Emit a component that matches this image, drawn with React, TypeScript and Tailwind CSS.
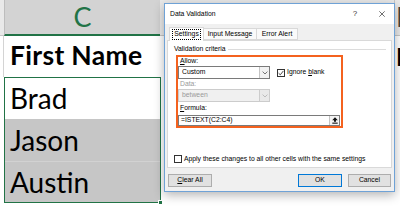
import React from "react";

function Chevron({ color }: { color: string }) {
  return (
    <svg width="6" height="4" viewBox="0 0 6 4">
      <path d="M0.6 0.6 L3 3 L5.4 0.6" fill="none" stroke={color} strokeWidth="0.8" />
    </svg>
  );
}

function Select({ value, disabled }: { value: string; disabled?: boolean }) {
  return (
    <div
      className={
        disabled
          ? "flex h-[13px] w-[92px] border border-[#cccccc] bg-[#f0f0f0] text-[#9a9a9a]"
          : "flex h-[13px] w-[92px] border border-[#7a7a7a] bg-white text-black"
      }
    >
      <div className="flex flex-1 items-center pl-[3px]">{value}</div>
      <div
        className={
          disabled
            ? "flex w-[10px] items-center justify-center border-l border-[#cccccc] bg-[#e9e9e9]"
            : "flex w-[10px] items-center justify-center border-l border-[#c4c4c4] bg-[#f2f2f2]"
        }
      >
        <Chevron color={disabled ? "#b0b0b0" : "#555555"} />
      </div>
    </div>
  );
}

function Check({ checked }: { checked?: boolean }) {
  return (
    <div className="flex h-[8px] w-[8px] shrink-0 items-center justify-center border border-[#333333] bg-white">
      {checked && (
        <svg width="6" height="6" viewBox="0 0 6 6">
          <path d="M0.6 3.2 L2.3 4.8 L5.4 0.9" fill="none" stroke="#222" strokeWidth="0.8" />
        </svg>
      )}
    </div>
  );
}

function Sheet() {
  return (
    <div className="flex flex-col font-['Lato',sans-serif]">
      <div className="flex h-[36px]">
        <div className="w-[4px] border-b border-[#c6c6c6] bg-[#e9e9e9]" />
        <div className="flex w-[156px] items-center justify-center border-b-2 border-l border-b-[#217346] border-l-[#bdbdbd] bg-[#d3d3d3] pb-[1px] text-[27px] leading-none text-[#217346]">
          C
        </div>
        <div className="w-[234px] border-b border-[#c6c6c6] bg-[#e9e9e9]" />
        <div className="flex-1 overflow-hidden border-b border-l border-[#c6c6c6] bg-[#e9e9e9] pl-[1px] text-[27px] leading-[34px] text-[#444444]">
          E
        </div>
      </div>
      <div className="flex h-[41px]">
        <div className="w-[4px] border-r border-[#d4d4d4]" />
        <div className="w-[156px] whitespace-nowrap pl-[6px] text-[26.5px] font-bold leading-[39px] tracking-[0.3px] text-black">
          First Name
        </div>
        <div className="w-[234px]" />
        <div className="flex-1 overflow-hidden pl-[2px] text-[24px] font-bold leading-[41px] text-black">E</div>
      </div>
      <div className="flex">
        <div className="w-[4px]" />
        <div className="relative w-[157px] border border-[#217346] text-[28px] text-black">
          <div className="h-[41px] bg-white pl-[5px] leading-[41px]">Brad</div>
          <div className="h-[42px] bg-[#c6c6c6] pl-[5px] leading-[42px]">Jason</div>
          <div className="h-[41px] border-t border-[#d2d2d2] bg-[#c6c6c6] pl-[5px] leading-[40px]">Austin</div>
          <div className="absolute bottom-[-3px] right-[-3px] h-[5px] w-[5px] border border-white bg-[#217346]" />
        </div>
      </div>
    </div>
  );
}

function Dialog() {
  return (
    <div className="absolute left-[164px] top-[3px] flex h-[189px] w-[231px] flex-col border border-[#6fa2d6] bg-[#f0f0f0] font-['Liberation_Sans',Arial,sans-serif] text-[6.8px] leading-none text-black shadow-[0_3px_10px_rgba(0,0,0,0.3)]">
      <div className="flex h-[20px] shrink-0 items-center bg-white pl-[5px]">
        <span>Data Validation</span>
        <span className="ml-auto flex w-[10px] justify-center text-[8px] text-[#333]">?</span>
        <span className="ml-[17px] mr-[7px] flex w-[10px] justify-center">
          <svg width="6" height="6" viewBox="0 0 6 6">
            <path d="M0.3 0.3 L5.7 5.7 M5.7 0.3 L0.3 5.7" stroke="#333" strokeWidth="0.7" />
          </svg>
        </span>
      </div>
      <div className="flex flex-col px-[2px] pt-[3px]">
        <div className="relative z-10 ml-[2px] flex h-[13px]">
          <div className="flex h-[14px] w-[35px] items-center justify-center border border-b-0 border-[#d9d9d9] bg-white">
            <span className="border border-dotted border-black px-[1px] py-[1.5px]">Settings</span>
          </div>
          <div className="mt-[1px] flex h-[12px] w-[53px] items-center justify-center border border-l-0 border-[#d9d9d9] bg-[#fafafa]">
            Input Message
          </div>
          <div className="mt-[1px] flex h-[12px] w-[41px] items-center justify-center border border-l-0 border-[#d9d9d9] bg-[#fafafa]">
            Error Alert
          </div>
        </div>
        <div className="flex h-[128px] flex-col border border-[#d9d9d9] bg-white">
          <div className="mt-[4px] flex h-[8px] items-center pl-[6px] pr-[5px]">
            <span>Validation criteria</span>
            <div className="ml-[2px] h-px flex-1 bg-[#dcdcdc]" />
          </div>
          <div className="ml-[8px] mt-[2px] flex h-[73px] w-[167px] flex-col border-2 border-[#f4621f]">
            <div className="flex h-[9px] items-center pl-[2px]">
              <span>
                <span className="underline">A</span>llow:
              </span>
            </div>
            <div className="flex h-[13px] items-center">
              <Select value="Custom" />
              <div className="ml-[7px] flex items-center">
                <Check checked />
                <span className="ml-[2px]">
                  Ignore <span className="underline">b</span>lank
                </span>
              </div>
            </div>
            <div className="mt-[1px] flex h-[9px] items-center pl-[2px] text-[#9a9a9a]">Data:</div>
            <Select value="between" disabled />
            <div className="mt-[2px] flex h-[9px] items-center pl-[2px]">
              <span>
                <span className="underline">F</span>ormula:
              </span>
            </div>
            <div className="mt-[2px] flex h-[11px] w-[162px] border border-[#7a7a7a] bg-white">
              <div className="flex flex-1 items-center pl-[2px]">=ISTEXT(C2:C4)</div>
              <div className="flex w-[10px] items-center justify-center border-l border-[#c4c4c4] bg-[#f4f4f4]">
                <svg width="6" height="7" viewBox="0 0 6 7">
                  <polygon points="3,0.3 5.8,3.2 4,3.2 4,4.8 2,4.8 2,3.2 0.2,3.2" fill="#111" />
                  <rect x="0.3" y="5.6" width="5.4" height="1.1" fill="#111" />
                </svg>
              </div>
            </div>
          </div>
          <div className="ml-[6px] mt-[27px] flex h-[8px] items-center">
            <Check />
            <span className="ml-[2px]">Apply these changes to all other cells with the same settings</span>
          </div>
        </div>
      </div>
      <div className="mt-[6px] flex h-[13px] px-[3px]">
        <div className="flex w-[44px] items-center justify-center border border-[#adadad] bg-[#e1e1e1]">
          <span>
            <span className="underline">C</span>lear All
          </span>
        </div>
        <div className="ml-auto flex w-[44px] items-center justify-center border border-[#0078d7] bg-[#e1e1e1]">OK</div>
        <div className="ml-[6px] flex w-[43px] items-center justify-center border border-[#adadad] bg-[#e1e1e1]">
          Cancel
        </div>
      </div>
    </div>
  );
}

export default function App() {
  return (
    <div className="relative h-[209px] w-[400px] overflow-hidden bg-white">
      <Sheet />
      <Dialog />
    </div>
  );
}
